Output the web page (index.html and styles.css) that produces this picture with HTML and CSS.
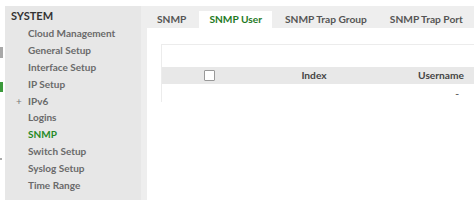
FILE: index.html
```html
<!DOCTYPE html>
<html lang="en">
<head>
    <meta charset="UTF-8">
    <meta name="viewport" content="width=device-width, initial-scale=1.0">
    <title>SNMP User</title>
    <link rel="stylesheet" href="styles.css">
</head>
<body>
    <div class="page">
        <div class="edge">
            <span class="edge-mark gray"></span>
            <span class="edge-mark green"></span>
            <span class="edge-mark dot"></span>
        </div>

        <div class="sidebar">
            <div class="menu-title">SYSTEM</div>
            <ul class="menu">
                <li>Cloud Management</li>
                <li>General Setup</li>
                <li>Interface Setup</li>
                <li>IP Setup</li>
                <li class="expand"><span class="plus">+</span>IPv6</li>
                <li>Logins</li>
                <li class="active">SNMP</li>
                <li>Switch Setup</li>
                <li>Syslog Setup</li>
                <li>Time Range</li>
            </ul>
        </div>

        <div class="main">
            <div class="tabs">
                <div class="tab">SNMP</div>
                <div class="tab active">SNMP User</div>
                <div class="tab">SNMP Trap Group</div>
                <div class="tab">SNMP Trap Port</div>
            </div>
            <div class="panel">
                <div class="table-box">
                    <div class="toolbar"></div>
                    <div class="table-head">
                        <div class="col-check"><span class="checkbox"></span></div>
                        <div class="col-index">Index</div>
                        <div class="col-user">Username</div>
                    </div>
                    <div class="table-row">
                        <div class="col-check"></div>
                        <div class="col-index"></div>
                        <div class="col-user">-</div>
                    </div>
                </div>
            </div>
        </div>
    </div>
</body>
</html>
```

FILE: styles.css
```css
body {
    margin: 0;
    font-family: Lato, 'Open Sans', sans-serif;
    background-color: #fff;
    color: #333;
    overflow: hidden;
}
.page {
    display: flex;
    width: 474px;
    height: 194px;
    margin-top: 6px;
}
.edge {
    width: 5px;
    flex-shrink: 0;
    display: flex;
    flex-direction: column;
}
.edge-mark {
    display: block;
    width: 3px;
}
.edge-mark.gray {
    margin-top: 41px;
    height: 11px;
    background-color: #a8a8a8;
}
.edge-mark.green {
    margin-top: 24px;
    height: 10px;
    background-color: #3c9a3c;
}
.edge-mark.dot {
    margin-top: 66px;
    width: 2px;
    height: 2px;
    background-color: #aaa;
}
.sidebar {
    width: 136px;
    flex-shrink: 0;
    background-color: #e7e7e7;
    padding-top: 3px;
}
.menu-title {
    padding-left: 6px;
    font-size: 11px;
    font-weight: 700;
    color: #333;
    line-height: 14px;
}
.menu {
    list-style: none;
    margin: 2px 0 0 0;
    padding: 0;
}
.menu li {
    padding-left: 23px;
    font-size: 10px;
    font-weight: 700;
    color: #6a6a6a;
    line-height: 16.9px;
    height: 16.9px;
    white-space: nowrap;
    position: relative;
}
.menu li.active {
    color: #268a26;
}
.menu .plus {
    position: absolute;
    left: 11px;
    font-weight: 400;
    color: #777;
}
.main {
    flex: 1;
    min-width: 0;
    background-color: #eeeeee;
    padding-left: 6px;
    display: flex;
    flex-direction: column;
    overflow: hidden;
}
.tabs {
    display: flex;
    height: 17px;
    margin-top: 5px;
}
.tab {
    padding: 0 10px;
    margin-right: 3px;
    font-size: 10.2px;
    font-weight: 700;
    color: #555;
    line-height: 17px;
    white-space: nowrap;
}
.tab.active {
    background-color: #fff;
    color: #1f7a1f;
}
.panel {
    flex: 1;
    background-color: #fff;
    padding: 16px 0 0 14px;
    overflow: hidden;
}
.table-box {
    border-top: 1px solid #ececec;
    border-left: 1px solid #ececec;
    width: 400px;
}
.toolbar {
    height: 22px;
}
.table-head,
.table-row {
    display: flex;
    height: 17px;
    line-height: 17px;
    font-size: 10.2px;
    font-weight: 700;
    color: #444;
    white-space: nowrap;
}
.table-head {
    background-color: #e8e8e8;
}
.table-row {
    height: 18px;
    line-height: 18px;
    color: #666;
}
.col-check {
    width: 94px;
    flex-shrink: 0;
    display: flex;
    align-items: center;
    justify-content: center;
}
.col-index {
    width: 116px;
    flex-shrink: 0;
    text-align: center;
}
.col-user {
    width: 92px;
    flex-shrink: 0;
    text-align: right;
}
.table-row .col-user {
    padding-right: 5px;
    width: 87px;
}
.checkbox {
    width: 9px;
    height: 9px;
    border: 1px solid #999;
    background-color: #fff;
    border-radius: 1px;
}
```
